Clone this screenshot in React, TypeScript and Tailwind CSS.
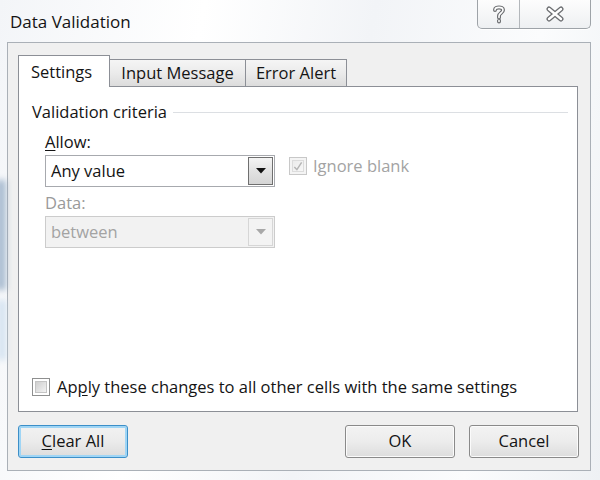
import React from "react";

function Checkbox({ checked, disabled }: { checked?: boolean; disabled?: boolean }) {
  return (
    <div
      className={
        "w-[18px] h-[18px] shrink-0 border flex items-center justify-center p-[2px] " +
        (disabled ? "border-[#c8c8c8] bg-[#f4f4f4]" : "border-[#8e8f8f] bg-white")
      }
    >
      <div
        className={
          "w-full h-full flex items-center justify-center " +
          (disabled
            ? "bg-[linear-gradient(135deg,#ececec,#f7f7f7)] border border-[#dcdcdc]"
            : "bg-[linear-gradient(135deg,#cfcfcf,#f2f2f2)] border border-[#c4c4c4]")
        }
      >
        {checked && (
          <svg width="11" height="11" viewBox="0 0 11 11">
            <path d="M1.5 6 L4.3 9 L9.5 1" fill="none" stroke="#b5b5b5" strokeWidth="1.6" />
          </svg>
        )}
      </div>
    </div>
  );
}

function Combo({ value, disabled }: { value: string; disabled?: boolean }) {
  return (
    <div
      className={
        "w-[230px] h-[32px] flex border " +
        (disabled ? "border-[#cccccc] bg-[#f2f2f2]" : "border-[#a7a9ae] bg-white")
      }
    >
      <div
        className={
          "flex-1 flex items-center pl-[5px] text-[16.5px] " +
          (disabled ? "text-[#a3a3a3]" : "text-[#141414]")
        }
      >
        {value}
      </div>
      <div
        className={
          "w-[25px] my-[1px] mr-[1px] flex items-center justify-center border " +
          (disabled
            ? "border-[#d6d6d6] bg-[#f3f3f3]"
            : "border-[#6f6f6f] bg-[linear-gradient(#f4f4f4,#e2e2e2_50%,#d5d5d5)]")
        }
      >
        <svg width="10" height="6" viewBox="0 0 10 6">
          <path d="M0 0 H10 L5 5.5 Z" fill={disabled ? "#a8a8a8" : "#111111"} />
        </svg>
      </div>
    </div>
  );
}

function Button({ children, focused }: { children: React.ReactNode; focused?: boolean }) {
  return (
    <div
      className={
        "w-[110px] h-[33px] rounded-[3px] border flex items-center justify-center text-[16.5px] text-[#141414] " +
        (focused
          ? "border-[#3c8fc8] shadow-[inset_0_0_0_2px_#9fd5f5] bg-[linear-gradient(#f2f2f2,#ebebeb_50%,#dcdcdc)]"
          : "border-[#8a8a8a] shadow-[inset_0_0_0_1px_#fbfbfb] bg-[linear-gradient(#f3f3f3,#ececec_50%,#dddddd)]")
      }
    >
      {children}
    </div>
  );
}

export default function App() {
  return (
    <div className="w-[600px] h-[480px] overflow-hidden relative bg-[linear-gradient(100deg,#f3f5f8,#ffffff_30%,#f2f4f7_55%,#fbfcfd_80%,#eef1f4)] font-['Open_Sans','Noto_Sans',sans-serif] flex flex-col">
      {/* glass blur at left edge */}
      <div className="absolute left-[-4px] top-[180px] w-[10px] h-[110px] bg-[#8aa4c0] blur-[3px] opacity-70" />
      <div className="absolute left-[-2px] top-[300px] w-[8px] h-[60px] bg-[#bcd4ea] blur-[3px] opacity-60" />

      {/* title bar */}
      <div className="h-[42px] shrink-0 flex items-start justify-between pl-[10px] pr-[9px]">
        <div className="mt-[9px] text-[17px] leading-[26px] text-[#141414]">Data Validation</div>
        <div className="flex h-[29px] rounded-b-[5px] border border-t-0 border-[#9ea3a8] bg-[linear-gradient(#fdfdfd,#eef0f2)] overflow-hidden shadow-[0_1px_0_#ffffff]">
          <div className="w-[42px] h-full flex items-center justify-center border-r border-[#b3b7bb]">
            <svg width="14" height="20" viewBox="0 0 14 20">
              <path
                d="M3 6 C3 2.5 11 2.5 11 6 C11 9 7 9 7 12 L7 13.5 M7 16.5 L7 17.5"
                fill="none"
                stroke="#6d6f72"
                strokeWidth="4"
                strokeLinecap="round"
              />
              <path
                d="M3 6 C3 2.5 11 2.5 11 6 C11 9 7 9 7 12 L7 13.5 M7 16.5 L7 17.5"
                fill="none"
                stroke="#ffffff"
                strokeWidth="1.6"
                strokeLinecap="round"
              />
            </svg>
          </div>
          <div className="w-[70px] h-full flex items-center justify-center">
            <svg width="20" height="16" viewBox="0 0 20 16">
              <path d="M4 3 L16 13 M16 3 L4 13" fill="none" stroke="#6d6f72" strokeWidth="5" strokeLinecap="round" />
              <path d="M4 3 L16 13 M16 3 L4 13" fill="none" stroke="#ffffff" strokeWidth="2.4" strokeLinecap="round" />
            </svg>
          </div>
        </div>
      </div>

      {/* client area */}
      <div className="ml-[7px] mr-[9px] h-[429px] border border-[#aab0b7] bg-[#f0f0f0] flex flex-col pl-[10px] pr-[11px] pt-[12px]">
        {/* tabs */}
        <div className="flex items-end h-[32px] relative z-10 -mb-px">
          <div className="w-[92px] h-[32px] border border-b-0 border-[#8c8f96] bg-white flex items-start pl-[12px] pt-[4px] text-[16.5px] text-[#141414]">
            Settings
          </div>
          <div className="w-[136px] h-[28px] border border-l-0 border-[#8c8f96] bg-[linear-gradient(#f5f5f5,#ebebeb_50%,#dcdcdc)] flex items-center justify-center pt-[1px] text-[16.5px] text-[#141414]">
            Input Message
          </div>
          <div className="w-[101px] h-[28px] border border-l-0 border-[#8c8f96] bg-[linear-gradient(#f5f5f5,#ebebeb_50%,#dcdcdc)] flex items-center justify-center pt-[1px] text-[16.5px] text-[#141414]">
            Error Alert
          </div>
        </div>

        {/* panel */}
        <div className="w-[560px] h-[326px] border border-[#8c8f96] bg-white flex flex-col pl-[13px] pr-[9px] pt-[15px] pb-[14px] text-[16.5px] text-[#141414]">
          <div className="flex items-center h-[20px]">
            <span>Validation criteria</span>
            <div className="flex-1 h-px bg-[#dcdfe3] ml-[6px]" />
          </div>
          <div className="pl-[13px] flex flex-col">
            <div className="mt-[10px] h-[20px] leading-[20px]">
              <span className="underline underline-offset-2">A</span>llow:
            </div>
            <div className="mt-[3px] flex items-start">
              <Combo value="Any value" />
              <div className="ml-[14px] mt-[2px] flex items-center h-[18px]">
                <Checkbox checked disabled />
                <span className="ml-[6px] text-[#a3a3a3]">Ignore blank</span>
              </div>
            </div>
            <div className="mt-[6px] h-[20px] leading-[20px] text-[#9a9a9a]">Data:</div>
            <div className="mt-[3px]">
              <Combo value="between" disabled />
            </div>
          </div>
          <div className="mt-auto flex items-center h-[20px]">
            <Checkbox />
            <span className="ml-[7px]">
              Ap<span className="underline underline-offset-2">p</span>ly these changes to all other cells with the same settings
            </span>
          </div>
        </div>

        {/* buttons */}
        <div className="mt-[13px] flex items-center">
          <Button focused>
            <span className="underline underline-offset-2">C</span>lear All
          </Button>
          <div className="flex-1" />
          <Button>OK</Button>
          <div className="w-[14px]" />
          <Button>Cancel</Button>
        </div>
      </div>
    </div>
  );
}
